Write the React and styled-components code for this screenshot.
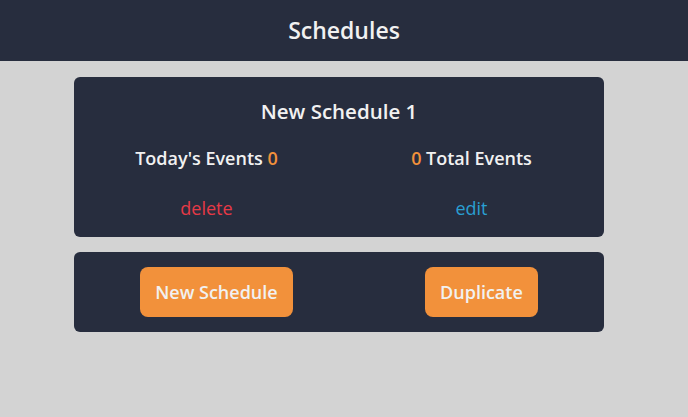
import styled, { createGlobalStyle } from 'styled-components';

const colors = {
  navy: '#272d3e',
  page: '#d3d3d3',
  text: '#f1f1f1',
  orange: '#f2913b',
  red: '#e63946',
  blue: '#2a9fd2',
};

const Global = createGlobalStyle`
  html, body {
    margin: 0;
    background: ${colors.page};
    font-family: "Open Sans", "Noto Sans", sans-serif;
  }
`;

const Header = styled.header`
  height: 61px;
  background: ${colors.navy};
  display: flex;
  align-items: center;
  justify-content: center;
`;

const HeaderTitle = styled.h1`
  margin: 0 0 1px;
  font-size: 23px;
  font-weight: 600;
  color: ${colors.text};
`;

const Main = styled.main`
  padding: 16px 10px 0 0;
  display: flex;
  flex-direction: column;
  align-items: center;
  gap: 15px;
`;

const Card = styled.section`
  width: 530px;
  box-sizing: border-box;
  background: ${colors.navy};
  border-radius: 6px;
  padding: ${(p) => p.$padding};
`;

const CardTitle = styled.h2`
  margin: 0;
  text-align: center;
  font-size: 20.5px;
  line-height: 28px;
  font-weight: 600;
  color: ${colors.text};
`;

const TwoCols = styled.div`
  display: grid;
  grid-template-columns: 1fr 1fr;
  margin-top: ${(p) => p.$top};
  text-align: center;
`;

const Stat = styled.span`
  font-size: 18px;
  line-height: 24px;
  font-weight: 600;
  color: ${colors.text};
`;

const Count = styled.span`
  color: ${colors.orange};
`;

const LinkBtn = styled.button`
  justify-self: center;
  border: none;
  background: none;
  padding: 0;
  cursor: pointer;
  font-family: inherit;
  font-size: 18px;
  line-height: 24px;
  color: ${(p) => p.$color};
`;

const ButtonRow = styled.div`
  display: flex;
  justify-content: space-around;
`;

const ActionBtn = styled.button`
  height: 50px;
  padding: 0 15px;
  border: none;
  border-radius: 8px;
  background: ${colors.orange};
  color: ${colors.text};
  font-family: inherit;
  font-size: 18px;
  font-weight: 600;
  cursor: pointer;
`;

export default function App() {
  return (
    <>
      <Global />
      <Header>
        <HeaderTitle>Schedules</HeaderTitle>
      </Header>
      <Main>
        <Card $padding="20px 0 17px">
          <CardTitle>New Schedule 1</CardTitle>
          <TwoCols $top="21px">
            <Stat>
              Today's Events <Count>0</Count>
            </Stat>
            <Stat>
              <Count>0</Count> Total Events
            </Stat>
          </TwoCols>
          <TwoCols $top="26px">
            <LinkBtn type="button" $color={colors.red}>delete</LinkBtn>
            <LinkBtn type="button" $color={colors.blue}>edit</LinkBtn>
          </TwoCols>
        </Card>
        <Card $padding="15px 0">
          <ButtonRow>
            <ActionBtn type="button">New Schedule</ActionBtn>
            <ActionBtn type="button">Duplicate</ActionBtn>
          </ButtonRow>
        </Card>
      </Main>
    </>
  );
}
